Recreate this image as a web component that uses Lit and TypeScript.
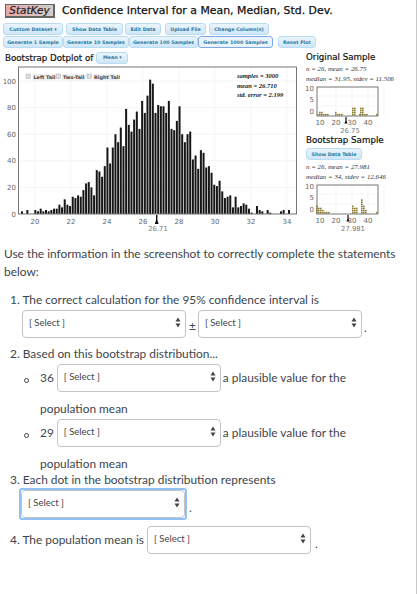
import { LitElement, html, css, svg } from "lit";
import { customElement } from "lit/decorators.js";

const LEFT = [2,0,3,0,0,3,2,4,2,3,2,3,4,4,7,5,11,7,6,13,12,14,13,18,23,24,20,14,33,32,28,36,50,38,50,60,54,65,51,79,67,62,71,77,64,85,76,89,101,98,76,82,81,81,76,85,64,63,70,81,60,54,60,62,41,44,34,48,46,35,36,31,22,21,25,17,12,13,14,5,13,5,6,8,7,4,1,0,6,3,2,0,3,1,0,0,0,2,3,0,3];
const ORIG: [number, number][] = [[317,1],[319,2],[321,2],[323,1],[325,1],[327,1],[335,2],[337,1],[339,1],[341,1],[352,4],[354,4],[359,1],[360,4],[362,4],[364,1],[366,1],[376,1]];
const BOOT: [number, number][] = [[316,4],[318,3],[320,3],[322,2],[324,1],[326,1],[328,1],[352,4],[354,3],[356,3],[361,7],[363,4],[365,2],[376,1]];

function mini(data: [number, number][], value: string, px: number, vx: number) {
  const X0 = 304;
  const dots = data.flatMap(([x, n]) =>
    Array.from({ length: n }, (_, i) => svg`<rect class="dot" x=${x - X0 - 1} y=${30 - 2.1 * (i + 1)} width="1.6" height="1.6"></rect>`));
  return html`<svg class="mini" width="90" height="49" viewBox="0 0 90 49">
    ${[1, 2, 3, 4].map(i => svg`<line class="grid" x1=${15 + i * 16} x2=${15 + i * 16} y1="1" y2="30"></line>`)}
    ${[10, 20].map(y => svg`<line class="grid" x1="12" x2="73" y1=${y} y2=${y}></line>`)}
    ${dots}
    <rect class="frame" x="12" y="1" width="61" height="29"></rect>
    <text class="ax" x="9" y="5" text-anchor="end">10</text>
    <text class="ax" x="9" y="16" text-anchor="end">5</text>
    <text class="ax" x="9" y="28" text-anchor="end">0</text>
    ${[[15, "10"], [31, "20"], [47, "30"], [63, "40"]].map(([x, t]) => svg`<text class="ax" x=${x} y="39" text-anchor="middle">${t}</text>`)}
    <path class="ptr" d="M${px - 0.6} 31h1.2v4l1 2.5h-3.2l1-2.5z"></path>
    <text class="val" x=${vx} y="47" text-anchor="middle">${value}</text>
  </svg>`;
}

@customElement("app-select")
class AppSelect extends LitElement {
  static styles = css`
    :host { display: inline-block; vertical-align: middle; }
    .box { box-sizing: border-box; width: 164px; height: 28px; border: 1px solid #c4c4c4; border-radius: 4px; background: #fff;
      display: flex; align-items: center; justify-content: space-between; padding: 0 4px 2px 6px;
      font: 9.5px "Lato", sans-serif; color: #444; }
    svg { display: block; }
  `;
  render() {
    return html`<div class="box"><span>[ Select ]</span>
      <svg width="6" height="11" viewBox="0 0 6 11"><path d="M3 0.5L5.5 4.5H0.5zM3 10.5L0.5 6.5H5.5z" fill="#444"></path></svg></div>`;
  }
}

@customElement("app-root")
export class AppRoot extends LitElement {
  static styles = css`
    :host { display: block; width: 417px; height: 594px; box-sizing: border-box; overflow: hidden; background: #fff;
      border-right: 1px solid #c8c8c8; position: relative; }
    .head { display: flex; align-items: center; gap: 7px; padding: 3px 0 0 5px; height: 15px; }
    .logo { width: 50px; height: 14px; box-sizing: border-box; border: 1px solid #666; border-right-width: 2px; border-bottom-width: 2px;
      background: linear-gradient(90deg, #e8a9a9, #cfcfcf); font: italic 10.5px "DejaVu Sans", sans-serif; -webkit-text-stroke: 0.2px #222; color: #222;
      display: flex; align-items: center; justify-content: center; }
    .title { font: 10.9px "DejaVu Sans", sans-serif; -webkit-text-stroke: 0.25px #111; white-space: nowrap; color: #111; }
    .btns { display: flex; padding-left: 3px; height: 12px; margin-top: 1px; }
    .r1 { margin-top: 5px; }
    .btn { box-sizing: border-box; height: 12px; border: 1px solid #b9dcf2; border-radius: 3px; background: linear-gradient(#eaf5fd, #cfe7f8);
      font: bold 4.8px "DejaVu Sans", sans-serif; color: #2a78a0; display: flex; align-items: center; justify-content: center; white-space: nowrap; }
    .sel { border-color: #7fa8e8; background: #e9f3fb; }
    .main { display: flex; margin-top: 3px; }
    .left { width: 301px; flex: none; }
    .lh { display: flex; align-items: center; gap: 3px; padding-left: 5px; height: 13px; font: 8.7px "DejaVu Sans", sans-serif; -webkit-text-stroke: 0.2px #111; color: #111; }
    .mean { width: 32px; height: 12px; -webkit-text-stroke: 0; }
    .plot { display: block; margin-top: 2px; }
    .grid { stroke: #efefef; stroke-width: 0.6; }
    .frame { fill: none; stroke: #777; stroke-width: 1; }
    .bar { fill: #161616; }
    .ax { font: 7px "DejaVu Sans", sans-serif; fill: #666; }
    .val { font: 6.8px "DejaVu Sans", sans-serif; fill: #777; }
    .ptr { fill: #111; }
    .st { font: italic bold 6.5px "Liberation Serif", serif; fill: #222; }
    .lg { font: bold 4.9px "DejaVu Sans", sans-serif; fill: #444; }
    .lgb { fill: #eee; }
    .cb { fill: #ddd; stroke: #aaa; stroke-width: 0.5; }
    .right { padding-left: 5px; }
    .rh { font: 8.7px "DejaVu Sans", sans-serif; -webkit-text-stroke: 0.2px #111; color: #111; white-space: nowrap; height: 13px; line-height: 13px; }
    .rh2 { margin-top: -1px; }
    .stats { font: italic 6.9px/9.5px "Liberation Serif", serif; color: #333; white-space: nowrap; }
    .mini { display: block; margin-left: -1px; }
    .dot { fill: #8a7a2e; }
    .show { width: 56px; height: 12px; margin: 1px 0 2px; }
    .mb { margin-top: 3px; }
    .q { font: 11.9px/18px "Lato", sans-serif; color: #3d454c; }
    .intro { padding: 0 4px; margin-top: 7px; width: 400px; box-sizing: border-box; }
    .row { padding-left: 10px; white-space: nowrap; }
    .first { margin-top: 10px; }
    .ctl { padding-left: 22px; display: flex; align-items: center; height: 29px; }
    .pm { margin: 4px 2px 0 3px; }
    .dotm { margin: 8px 0 0 2px; }
    .sub { display: flex; align-items: center; height: 29px; padding-left: 40px; position: relative; white-space: nowrap; }
    .sub::before { content: ""; position: absolute; left: 24px; top: 15px; width: 3px; height: 3px; border: 0.7px solid #3d454c; border-radius: 50%; }
    .sub app-select { margin: 0 2px 0 3px; }
    .subt { padding-left: 40px; margin-top: 8px; height: 18px; }
    .q3 { margin-top: -2px; }
    .q2 { margin-top: 7px; }
    .focus { display: inline-block; border: 2px solid #8fc1f7; border-radius: 3px; margin-left: -2px; }
    .focus app-select { display: block; }
    .ctl3 { height: 31px; padding-left: 21px; margin-top: -1px; }
    .last { display: flex; align-items: center; height: 29px; padding-left: 10px; margin-top: 6px; white-space: nowrap; }
    .last app-select { margin: 0 2px 0 3px; }
  `;

  private plot() {
    const X = (i: number) => 21 + i * 2.67;
    const ticks = [20, 22, 24, 26, 28, 30, 32, 34];
    return html`<svg class="plot" width="300" height="172" viewBox="0 0 300 172">
      ${ticks.map((t, i) => svg`<line class="grid" x1=${35 + i * 36} x2=${35 + i * 36} y1="1" y2="148"></line>`)}
      ${[0, 1, 2, 3, 4, 5].map(i => svg`<line class="grid" x1="18" x2="296" y1=${148 - i * 26.6} y2=${148 - i * 26.6}></line>`)}
      ${LEFT.map((v, i) => svg`<rect class="bar" x=${X(i)} y=${148 - v * 1.33} width="2" height=${v * 1.33}></rect>`)}
      <rect class="frame" x="18.5" y="1" width="278" height="147"></rect>
      ${[0, 20, 40, 60, 80, 100].map((v, i) => svg`<text class="ax" x="16" y=${150.5 - i * 26.6} text-anchor="end">${v}</text>`)}
      ${ticks.map((t, i) => svg`<text class="ax" x=${35 + i * 36} y="158" text-anchor="middle">${t}</text>`)}
      <path class="ptr" d="M156 149h1.4v5l1.2 4h-3.8l1.2-4z"></path>
      <text class="val" x="158" y="165" text-anchor="middle">26.71</text>
      <rect class="cb" x="26" y="8" width="4.5" height="4.5"></rect><rect class="lgb" x="32.5" y="8" width="22" height="6.5"></rect><text class="lg" x="33.5" y="13">Left Tail</text>
      <rect class="cb" x="56" y="8" width="4.5" height="4.5"></rect><rect class="lgb" x="62" y="8" width="23" height="6.5"></rect><text class="lg" x="63" y="13">Two-Tail</text>
      <rect class="cb" x="87" y="8" width="4.5" height="4.5"></rect><rect class="lgb" x="93" y="8" width="26" height="6.5"></rect><text class="lg" x="94" y="13">Right Tail</text>
      <text class="st" x="237" y="12">samples = 3000</text>
      <text class="st" x="237" y="21.5">mean = 26.710</text>
      <text class="st" x="237" y="31">std. error = 2.199</text>
    </svg>`;
  }

  private btn(t: string, w: number, cls = "", ml = 0) {
    return html`<div class="btn ${cls}" style="width:${w}px;margin-left:${ml}px">${t}</div>`;
  }

  render() {
    return html`
      <div class="head"><div class="logo">StatKey</div><div class="title">Confidence Interval for a Mean, Median, Std. Dev.</div></div>
      <div class="btns r1">
        ${this.btn("Custom Dataset ▾", 60)}${this.btn("Show Data Table", 57, "", 3)}${this.btn("Edit Data", 36, "", 2)}${this.btn("Upload File", 41, "", 4)}${this.btn("Change Column(s)", 60, "", 3)}
      </div>
      <div class="btns">
        ${this.btn("Generate 1 Sample", 60)}${this.btn("Generate 10 Samples", 66)}${this.btn("Generate 100 Samples", 69)}${this.btn("Generate 1000 Samples", 75, "sel")}
        ${this.btn("Reset Plot", 38, "", 5)}
      </div>
      <div class="main">
        <div class="left">
          <div class="lh"><span>Bootstrap Dotplot of</span><div class="btn mean">Mean ▾</div></div>
          ${this.plot()}
        </div>
        <div class="right">
          <div class="rh">Original Sample</div>
          <div class="stats">n = 26, mean = 26.75<br>median = 31.95, stdev = 11.506</div>
          <div class="mb">${mini(ORIG, "26.75", 41, 45)}</div>
          <div class="rh rh2">Bootstrap Sample</div>
          <div class="btn show">Show Data Table</div>
          <div class="stats">n = 26, mean = 27.981<br>median = 34, stdev = 12.646</div>
          <div class="mb">${mini(BOOT, "27.981", 43, 48)}</div>
        </div>
      </div>
      <div class="q intro">Use the information in the screenshot to correctly complete the statements below:</div>
      <div class="q row first">1. The correct calculation for the 95% confidence interval is</div>
      <div class="q ctl"><app-select></app-select><span class="pm">±</span><app-select></app-select><span class="dotm">.</span></div>
      <div class="q row q2">2. Based on this bootstrap distribution...</div>
      <div class="q sub"><span>36</span><app-select></app-select><span>a plausible value for the</span></div>
      <div class="q subt">population mean</div>
      <div class="q sub"><span>29</span><app-select></app-select><span>a plausible value for the</span></div>
      <div class="q subt">population mean</div>
      <div class="q row q3">3. Each dot in the bootstrap distribution represents</div>
      <div class="q ctl ctl3"><span class="focus"><app-select></app-select></span><span class="dotm">.</span></div>
      <div class="q last"><span>4. The population mean is</span><app-select></app-select><span class="dotm">.</span></div>
    `;
  }
}
